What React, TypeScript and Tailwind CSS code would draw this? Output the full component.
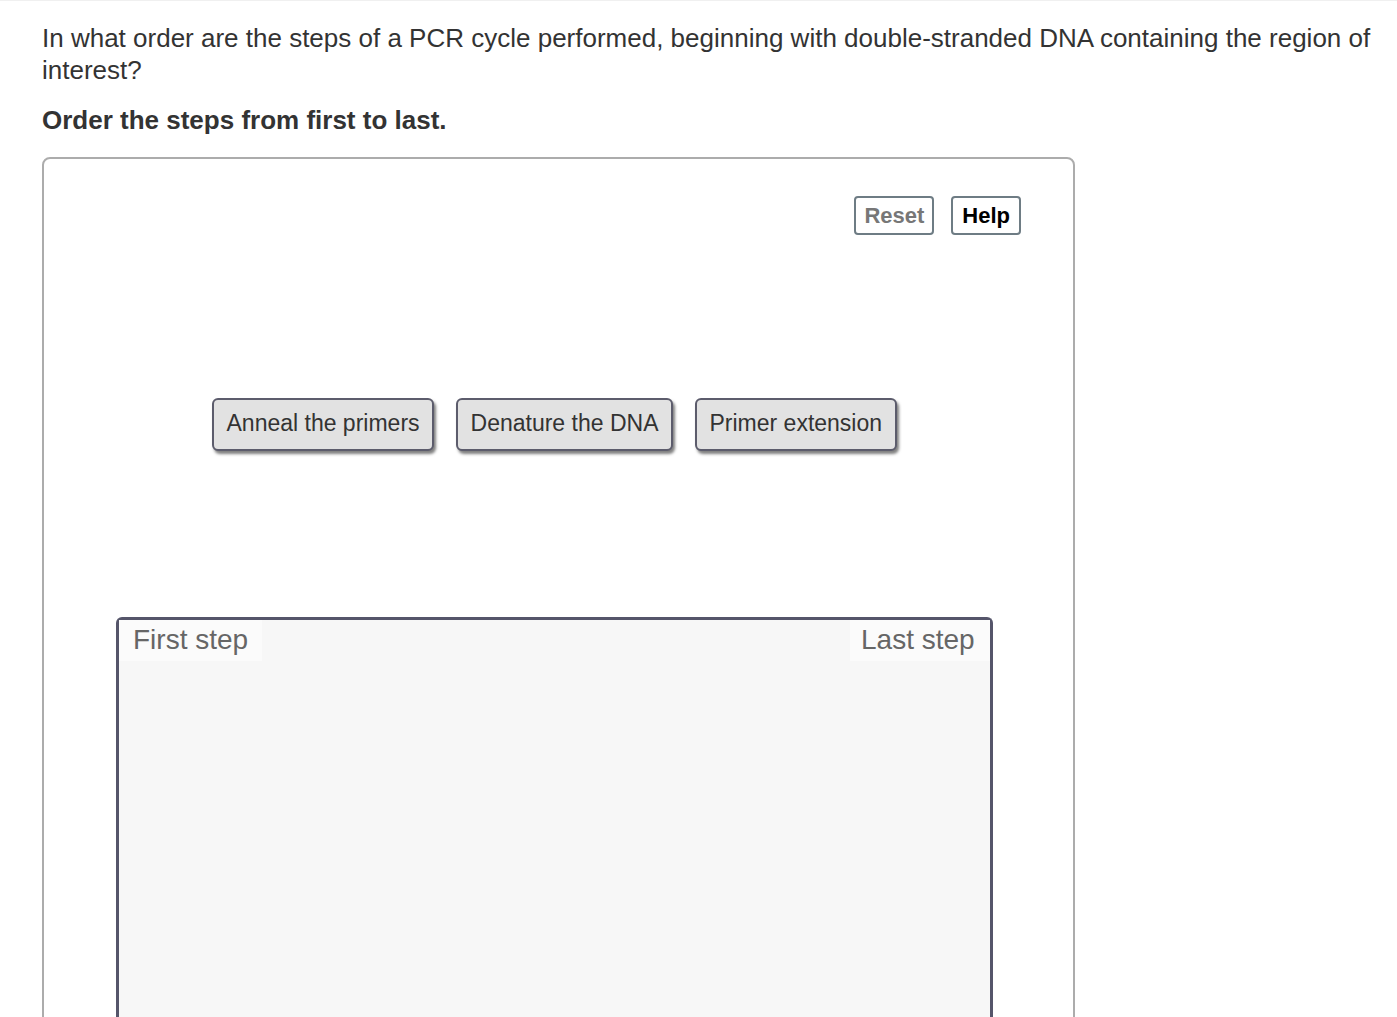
import React from "react";

const font = { fontFamily: '"Liberation Sans", Arial, Helvetica, sans-serif' };

function Tile({ label }: { label: string }) {
  return (
    <div className="h-[53px] px-[12.5px] pb-[2px] flex items-center rounded-[6px] border-2 border-[#5c5c6c] bg-[#e2e2e2] text-[23px] text-[#333] shadow-[2px_3px_3px_rgba(0,0,0,0.5)] whitespace-nowrap">
      {label}
    </div>
  );
}

export default function App() {
  return (
    <div style={font} className="w-[1397px] h-[1017px] overflow-hidden bg-white border-t border-[#f0f0f0]">
      <div className="pl-[42px] pr-[20px] pt-[21px]">
        <p className="text-[26px] leading-[32px] text-[#333] w-[1340px]">
          In what order are the steps of a PCR cycle performed, beginning with double-stranded DNA containing the region of interest?
        </p>
        <p className="mt-[18px] text-[26px] leading-[32px] font-bold text-[#333]">
          Order the steps from first to last.
        </p>
        <div className="mt-[21px] w-[1033px] h-[900px] border-2 border-[#acacac] rounded-[8px] pt-[37px]">
          <div className="flex justify-end gap-[17px] pr-[52px]">
            <button className="h-[39px] px-[8px] rounded-[4px] border-2 border-[#6e7c84] bg-white text-[22px] font-bold text-[#777]">
              Reset
            </button>
            <button className="h-[39px] px-[9px] rounded-[4px] border-2 border-[#6e7c84] bg-white text-[22px] font-bold text-black">
              Help
            </button>
          </div>
          <div className="mt-[163px] flex gap-[22px] pl-[168px]">
            <Tile label="Anneal the primers" />
            <Tile label="Denature the DNA" />
            <Tile label="Primer extension" />
          </div>
          <div className="ml-[72px] mt-[166px] w-[877px] h-[500px] border-[3px] border-b-0 border-[#55556a] rounded-t-[6px] bg-[#f7f7f7] flex justify-between">
            <div className="h-[41px] w-[143px] bg-[#fbfbfb] pl-[14px] text-[28px] leading-[40px] text-[#666]">First step</div>
            <div className="h-[41px] w-[140px] bg-[#fbfbfb] pl-[11px] text-[28px] leading-[40px] text-[#666]">Last step</div>
          </div>
        </div>
      </div>
    </div>
  );
}
